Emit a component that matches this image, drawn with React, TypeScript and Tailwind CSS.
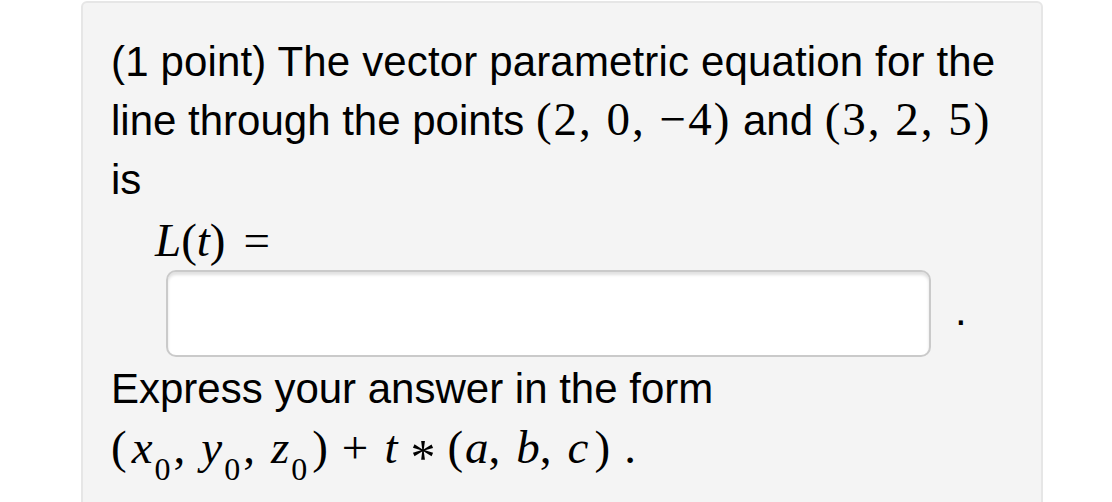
export default function App() {
  const math = "font-['Liberation_Serif',serif] text-[47px]";
  const sub = "text-[32px] align-[-9px] leading-[0] ml-[2px]";
  return (
    <div className="w-[1112px] h-[502px] overflow-hidden bg-white">
      <div className="ml-[81px] mt-[1px] w-[962px] h-[520px] rounded-t-[6px] border-2 border-[#e6e6e6] bg-[#f4f4f4] pl-[28px] pt-[29px] text-black font-['Liberation_Sans',Arial,sans-serif] text-[42px] leading-[59px]">
        <div className="h-[59px] tracking-[0.15px]">(1 point) The vector parametric equation for the</div>
        <div className="h-[59px] whitespace-nowrap">
          line through the points{" "}
          <span className={`${math} leading-[0] tracking-[2px]`}>(2, 0, −4)</span> and{" "}
          <span className={`${math} leading-[0] tracking-[2px]`}>(3, 2, 5)</span>
        </div>
        <div className="h-[59px]">is</div>
        <div className={`${math} h-[60px] leading-[59px] mt-[2px] pl-[44px]`}>
          <i>L</i>(<i>t</i>)<span className="ml-[18px]">=</span>
        </div>
        <div className="flex items-center pl-[55px] -mt-[1px]">
          <div className="w-[765px] h-[87px] rounded-[10px] border-2 border-[#cacaca] bg-white shadow-[inset_0_3px_3px_rgba(0,0,0,0.12)]" />
          <span className="ml-[24px] -mt-[6px]">.</span>
        </div>
        <div className="h-[59px] mt-[2px]">Express your answer in the form</div>
        <div className={`${math} h-[59px] leading-[59px] whitespace-nowrap`}>
          (<i className="ml-[5px]">x</i>
          <sub className={sub}>0</sub>
          <span className="ml-[3px]">,</span>
          <i className="ml-[16px]">y</i>
          <sub className={sub}>0</sub>
          <span className="ml-[3px]">,</span>
          <i className="ml-[16px]">z</i>
          <sub className={sub}>0</sub>
          <span className="ml-[5px]">)</span>
          <span className="ml-[14px]">+</span>
          <i className="ml-[16px]">t</i>
          <span className="inline-block ml-[13px] text-[50px] align-[-11px]">*</span>
          <span className="ml-[12px]">(</span>
          <i className="ml-[2px]">a</i>
          <span>,</span>
          <i className="ml-[16px]">b</i>
          <span>,</span>
          <i className="ml-[16px]">c</i>
          <span className="ml-[6px]">)</span>
          <span className="ml-[14px]">.</span>
        </div>
      </div>
    </div>
  );
}
